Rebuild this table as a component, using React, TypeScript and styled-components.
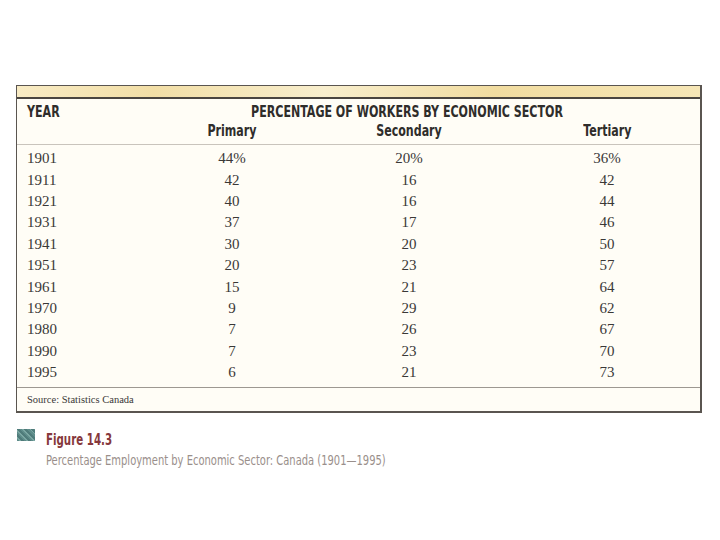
import styled, { createGlobalStyle } from 'styled-components';

const GlobalStyle = createGlobalStyle`
  html, body {
    margin: 0;
    padding: 0;
    background: #ffffff;
  }
`;

const NARROW = `"Liberation Sans Narrow", "DejaVu Sans Condensed", "Liberation Sans", sans-serif`;
const SERIF = `"Liberation Serif", "DejaVu Serif", serif`;

const ROWS = [
  ['1901', '44%', '20%', '36%'],
  ['1911', '42', '16', '42'],
  ['1921', '40', '16', '44'],
  ['1931', '37', '17', '46'],
  ['1941', '30', '20', '50'],
  ['1951', '20', '23', '57'],
  ['1961', '15', '21', '64'],
  ['1970', '9', '29', '62'],
  ['1980', '7', '26', '67'],
  ['1990', '7', '23', '70'],
  ['1995', '6', '21', '73'],
];

const Page = styled.div`
  width: 720px;
  height: 540px;
  padding: 85px 0 0 16px;
  box-sizing: border-box;
`;

const Box = styled.div`
  width: 686px;
  box-sizing: border-box;
  border: 1px solid #5a5550;
  border-right-width: 2px;
  border-bottom-width: 2px;
  background: #fffdf6;
`;

const Band = styled.div`
  height: 11px;
  border-bottom: 2px solid #4a4540;
  background: linear-gradient(90deg, #f8ebc4 0%, #f2dea6 20%, #f8eecd 45%, #f1dca0 70%, #f6e6b6 100%);
`;

const Grid = styled.div`
  display: grid;
  grid-template-columns: 133px 144px 210px 186px;
  padding-left: 10px;
`;

const HeadCell = styled.div<{ $col: string; $row: number; $center?: boolean }>`
  grid-column: ${({ $col }) => $col};
  grid-row: ${({ $row }) => $row};
  justify-self: ${({ $center }) => ($center ? 'center' : 'start')};
  font-family: ${NARROW};
  font-weight: 700;
  font-size: 15px;
  line-height: 19px;
  color: #2f2d2b;
  white-space: nowrap;
  transform: scaleX(0.82);
  transform-origin: ${({ $center }) => ($center ? 'center' : 'left')};
`;

const Title = styled(HeadCell)`
  justify-self: stretch;
  text-align: center;
  padding-right: 46px;
  transform-origin: 247px 50%;
`;

const HeadArea = styled(Grid)`
  padding-top: 4px;
  padding-bottom: 3px;
  grid-template-rows: 19px 19px;
  border-bottom: 1px solid #c9c4bc;
`;

const Body = styled(Grid)`
  padding-top: 3px;
  padding-bottom: 4px;
  border-bottom: 1px solid #9d9891;
  grid-auto-rows: 21.4px;
  align-items: center;
`;

const Cell = styled.div<{ $center?: boolean }>`
  justify-self: ${({ $center }) => ($center ? 'center' : 'start')};
  font-family: ${SERIF};
  font-size: 15px;
  color: #3a3836;
`;

const Source = styled.div`
  height: 23px;
  display: flex;
  align-items: center;
  padding-left: 10px;
  font-family: ${SERIF};
  font-size: 10.5px;
  color: #3a3836;
`;

const Caption = styled.div`
  display: grid;
  grid-template-columns: 18px auto;
  column-gap: 11px;
  margin-top: 20px;
  margin-left: 1px;
`;

const Swatch = styled.div`
  width: 18px;
  height: 12px;
  margin-top: -4px;
  background: repeating-linear-gradient(45deg, #5e8c8a 0 2px, #7aa6a2 2px 3px, #4f7b7a 3px 5px);
`;

const FigureLabel = styled.div`
  font-family: ${NARROW};
  font-weight: 700;
  font-size: 15px;
  line-height: 15px;
  color: #86383c;
  transform: scaleX(0.76);
  transform-origin: left;
  white-space: nowrap;
`;

const FigureText = styled.div`
  grid-column: 2;
  margin-top: 4px;
  font-family: ${NARROW};
  font-size: 14px;
  color: #9a8f8b;
  white-space: nowrap;
  transform: scaleX(0.79);
  transform-origin: left;
`;

export default function App() {
  return (
    <Page>
      <GlobalStyle />
      <Box>
        <Band />
        <HeadArea>
          <HeadCell $col="1" $row={1}>YEAR</HeadCell>
          <Title $col="2 / 5" $row={1}>PERCENTAGE OF WORKERS BY ECONOMIC SECTOR</Title>
          <HeadCell $col="2" $row={2} $center>Primary</HeadCell>
          <HeadCell $col="3" $row={2} $center>Secondary</HeadCell>
          <HeadCell $col="4" $row={2} $center>Tertiary</HeadCell>
        </HeadArea>
        <Body>
          {ROWS.map((r) => [
            <Cell key={r[0]}>{r[0]}</Cell>,
            <Cell key={r[0] + 'p'} $center>{r[1]}</Cell>,
            <Cell key={r[0] + 's'} $center>{r[2]}</Cell>,
            <Cell key={r[0] + 't'} $center>{r[3]}</Cell>,
          ])}
        </Body>
        <Source>Source: Statistics Canada</Source>
      </Box>
      <Caption>
        <Swatch />
        <FigureLabel>Figure 14.3</FigureLabel>
        <FigureText>Percentage Employment by Economic Sector: Canada (1901—1995)</FigureText>
      </Caption>
    </Page>
  );
}
